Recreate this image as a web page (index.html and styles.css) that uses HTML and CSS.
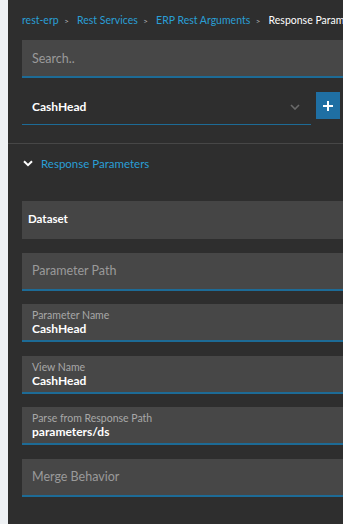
FILE: index.html
```html
<!DOCTYPE html>
<html>
  <head>
    <meta charset="utf-8" />
    <title>Response Parameters</title>
    <link rel="stylesheet" href="styles.css">
  </head>
  <body>
    <div class="panel">
      <nav class="crumbs">
        <a>rest-erp</a><span class="sep">&gt;</span>
        <a>Rest Services</a><span class="sep">&gt;</span>
        <a>ERP Rest Arguments</a><span class="sep">&gt;</span>
        <span class="current">Response Parameters</span>
      </nav>
      <div class="search">Search..</div>
      <div class="picker">
        <div class="select">
          <span>CashHead</span>
          <svg class="caret" width="10" height="6" viewBox="0 0 10 6">
            <path d="M1 1l4 4 4-4" fill="none" stroke="#6a6a6a" stroke-width="1.6" />
          </svg>
        </div>
        <button class="add">
          <svg width="10" height="10" viewBox="0 0 10 10">
            <path d="M5 0v10M0 5h10" stroke="#fff" stroke-width="2" />
          </svg>
        </button>
      </div>
      <hr class="divider" />
      <div class="section">
        <svg class="chev" width="10" height="7" viewBox="0 0 10 7">
          <path d="M1 1.2l4 4 4-4" fill="none" stroke="#fff" stroke-width="2" />
        </svg>
        <span>Response Parameters</span>
      </div>
      <div class="fields">
        <div class="field title">Dataset</div>
        <div class="field empty">Parameter Path</div>
        <div class="field">
          <label>Parameter Name</label>
          <div class="value">CashHead</div>
        </div>
        <div class="field">
          <label>View Name</label>
          <div class="value">CashHead</div>
        </div>
        <div class="field">
          <label>Parse from Response Path</label>
          <div class="value">parameters/ds</div>
        </div>
        <div class="field empty">Merge Behavior</div>
      </div>
    </div>
  </body>
</html>
```

FILE: styles.css
```css
* {
  box-sizing: border-box;
  font-family: "Lato", "Noto Sans", sans-serif;
}
html,
body {
  margin: 0;
  height: 100%;
  overflow: hidden;
  background: #eef1f4;
}
body {
  padding-left: 8px;
}
.panel {
  width: 460px;
  height: 100%;
  background: #2e2e2e;
  padding-top: 13px;
}
.crumbs {
  padding-left: 14px;
  font-size: 10.5px;
  white-space: nowrap;
  height: 14px;
  line-height: 14px;
}
.crumbs a {
  color: #2a9fd6;
}
.crumbs .sep {
  color: #bbb;
  font-size: 8px;
  margin: 0 5.5px;
}
.crumbs .current {
  color: #fff;
}
.search {
  margin: 13px 0 0 14px;
  height: 38px;
  background: #474747;
  border-bottom: 2px solid #1d6b96;
  color: #9a9a9a;
  font-size: 12.5px;
  padding: 11px 10px;
}
.picker {
  display: flex;
  align-items: flex-start;
  margin: 13px 0 0 14px;
  height: 52px;
}
.select {
  width: 289px;
  height: 34px;
  border-bottom: 1px solid #1d6b96;
  display: flex;
  align-items: center;
  justify-content: space-between;
  padding: 0 10px 2px 10px;
  color: #fff;
  font-size: 12px;
  font-weight: 700;
}
.caret {
  margin-right: 1px;
}
.add {
  margin: 1px 0 0 5px;
  width: 24px;
  height: 27px;
  border: 0;
  padding: 0;
  background: #1f6fa3;
  display: flex;
  align-items: center;
  justify-content: center;
}
.divider {
  margin: 0;
  border: 0;
  border-top: 1px solid #474747;
}
.section {
  display: flex;
  align-items: center;
  height: 38px;
  padding-left: 15px;
  color: #2a9fd6;
  font-size: 11.5px;
}
.chev {
  margin-right: 8px;
}
.fields {
  display: flex;
  flex-direction: column;
  gap: 13.6px;
  margin: 19px 0 0 14px;
}
.field {
  height: 38px;
  background: #474747;
  border-bottom: 2px solid #1d6b96;
  padding: 5px 10px 0;
}
.field.title {
  background: #454545;
  border-bottom: 0;
  color: #fff;
  font-size: 11.5px;
  font-weight: 700;
  padding: 11px 6px;
}
.field.empty {
  color: #9a9a9a;
  font-size: 12.5px;
  padding-top: 10px;
}
.field label {
  display: block;
  color: #a8a8a8;
  font-size: 10.5px;
  line-height: 12px;
}
.field .value {
  color: #fff;
  font-size: 12px;
  font-weight: 700;
  line-height: 16px;
}
```
